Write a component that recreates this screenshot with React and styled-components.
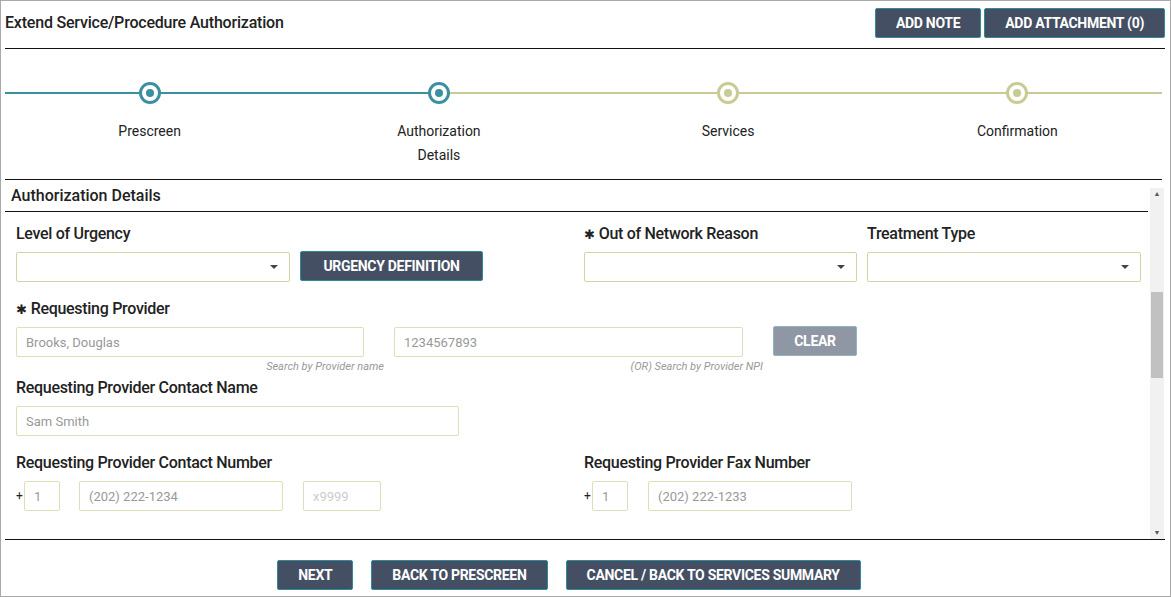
import React from 'react';
import styled, { createGlobalStyle } from 'styled-components';

const Global = createGlobalStyle`
  html, body { margin: 0; padding: 0; background: #fff; }
  body { font-family: Roboto, "Liberation Sans", sans-serif; color: #222; }
  * { box-sizing: border-box; }
`;

const Frame = styled.div`
  width: 1171px;
  height: 597px;
  border: 1px solid #a9a9a9;
  padding: 0 5px 0 4px;
  display: flex;
  flex-direction: column;
  overflow: hidden;
`;

const Header = styled.div`
  display: flex;
  align-items: center;
  justify-content: space-between;
  height: 48px;
  padding-bottom: 10px;
  padding-top: 6px;
  border-bottom: 1px solid #111;
`;

const Title = styled.div`
  font-size: 16px;
  font-weight: 500;
  letter-spacing: -0.2px;
`;

const Actions = styled.div`
  display: flex;
  gap: 3px;
  margin-right: 0;
`;

const DarkButton = styled.button`
  height: ${p => p.h || 30}px;
  padding: 0 ${p => p.px || 20}px;
  background: ${p => (p.muted ? '#8f97a4' : '#454f63')};
  color: #fff;
  border: 1px solid ${p => (p.muted ? '#8fb6bf' : '#2e8b9a')};
  border-radius: 2px;
  font-family: Roboto, "Liberation Sans", sans-serif;
  font-weight: 700;
  font-size: 14px;
  letter-spacing: -0.3px;
  cursor: pointer;
`;

const Stepper = styled.div`
  display: grid;
  grid-template-columns: repeat(4, 1fr);
  height: 131px;
  border-bottom: 1px solid #111;
  width: 1157px;
`;

const Step = styled.div`
  position: relative;
  display: flex;
  flex-direction: column;
  align-items: center;
  padding-top: 33px;
`;

const Track = styled.div`
  position: absolute;
  top: 43px;
  height: 2px;
  background: ${p => p.c};
  left: ${p => (p.side === 'left' ? '0' : '50%')};
  right: ${p => (p.side === 'left' ? '50%' : '0')};
`;

const Dot = styled.div`
  position: relative;
  z-index: 1;
  width: 22px;
  height: 22px;
  border-radius: 50%;
  border: 3px solid ${p => p.c};
  background: #fff;
  display: flex;
  align-items: center;
  justify-content: center;
  &::after {
    content: '';
    width: 8px;
    height: 8px;
    border-radius: 50%;
    background: ${p => p.c};
  }
`;

const StepLabel = styled.div`
  margin-top: 15px;
  font-size: 14px;
  line-height: 24px;
  text-align: center;
  width: 100px;
`;

const Body = styled.div`
  display: flex;
  height: 360px;
  border-bottom: 1px solid #111;
`;

const Content = styled.div`
  flex: 1;
  padding-top: 6px;
`;

const SectionTitle = styled.div`
  font-size: 16px;
  font-weight: 500;
  padding: 0 0 6px 6px;
  border-bottom: 1px solid #111;
`;

const Scrollbar = styled.div`
  width: 14px;
  margin: 8px 1px 0 2px;
  background: #f1f1f1;
  display: flex;
  flex-direction: column;
  align-items: center;
  font-size: 7px;
  color: #555;
  padding: 2px 0;
`;

const Thumb = styled.div`
  width: 12px;
  height: 86px;
  margin-top: 94px;
  background: #c1c1c1;
  flex: none;
`;

const Form = styled.div`
  padding: 0 0 0 11px;
`;

const Row = styled.div`
  display: flex;
  align-items: flex-start;
  margin-top: ${p => p.mt || 0}px;
`;

const Field = styled.div`
  width: ${p => p.w}px;
  margin-right: ${p => p.mr || 0}px;
  display: flex;
  flex-direction: column;
`;

const Label = styled.div`
  font-size: 16px;
  font-weight: 500;
  letter-spacing: -0.3px;
  height: 24px;
  line-height: 24px;
  margin-bottom: 6px;
  color: #222;
`;

const Star = styled.span`
  font-size: 13px;
  margin-right: 4px;
`;

const Select = styled.div`
  height: 30px;
  width: ${p => p.w}px;
  border: 1px solid #d2d5a3;
  border-radius: 2px;
  display: flex;
  align-items: center;
  justify-content: flex-end;
  padding-right: 11px;
  &::after {
    content: '';
    border-left: 4px solid transparent;
    border-right: 4px solid transparent;
    border-top: 4px solid #444;
  }
`;

const Input = styled.input`
  height: 30px;
  width: ${p => p.w}px;
  margin-right: ${p => p.mr || 0}px;
  border: 1px solid #dcdfb8;
  border-radius: 2px;
  padding: 0 9px;
  font-family: Roboto, "Liberation Sans", sans-serif;
  font-size: 13px;
  color: #999;
  flex: none;
  &::placeholder { color: ${p => (p.faint ? '#ccc' : '#999')}; }
`;

const Hint = styled.div`
  font-size: 11px;
  font-style: italic;
  color: #999;
  text-align: right;
  margin-top: 3px;
  margin-right: -20px;
`;

const Plus = styled.span`
  font-size: 12px;
  width: 8px;
  line-height: 30px;
  flex: none;
`;

const Footer = styled.div`
  display: flex;
  justify-content: center;
  gap: 18px;
  padding-top: 20px;
  padding-right: 32px;
`;

const steps = [
  { label: 'Prescreen', left: '#3a8fa0', right: '#3a8fa0', dot: '#3a8fa0' },
  { label: 'Authorization Details', left: '#3a8fa0', right: '#c8cb93', dot: '#3a8fa0' },
  { label: 'Services', left: '#c8cb93', right: '#c8cb93', dot: '#c8cb93' },
  { label: 'Confirmation', left: '#c8cb93', right: '#c8cb93', dot: '#c8cb93' },
];

export default function App() {
  return (
    <Frame>
      <Global />
      <Header>
        <Title>Extend Service/Procedure Authorization</Title>
        <Actions>
          <DarkButton px={20}>ADD NOTE</DarkButton>
          <DarkButton px={20}>ADD ATTACHMENT (0)</DarkButton>
        </Actions>
      </Header>

      <Stepper>
        {steps.map(s => (
          <Step key={s.label}>
            <Track side="left" c={s.left} />
            <Track side="right" c={s.right} />
            <Dot c={s.dot} />
            <StepLabel>{s.label}</StepLabel>
          </Step>
        ))}
      </Stepper>

      <Body>
        <Content>
          <SectionTitle>Authorization Details</SectionTitle>
          <Form>
            <Row mt={10}>
              <Field w={274} mr={10}>
                <Label>Level of Urgency</Label>
                <Select w={274} />
              </Field>
              <Field w={284}>
                <Label>&nbsp;</Label>
                <DarkButton style={{ width: 183, marginTop: -1 }}>URGENCY DEFINITION</DarkButton>
              </Field>
              <Field w={273} mr={10}>
                <Label><Star>✱</Star>Out of Network Reason</Label>
                <Select w={273} />
              </Field>
              <Field w={274}>
                <Label>Treatment Type</Label>
                <Select w={274} />
              </Field>
            </Row>

            <Row mt={15}>
              <Field w={900}>
                <Label><Star>✱</Star>Requesting Provider</Label>
                <Row>
                  <Field w={348} mr={30}>
                    <Input w={348} placeholder="Brooks, Douglas" />
                    <Hint>Search by Provider name</Hint>
                  </Field>
                  <Field w={349} mr={30}>
                    <Input w={349} placeholder="1234567893" />
                    <Hint>(OR) Search by Provider NPI</Hint>
                  </Field>
                  <DarkButton muted style={{ width: 84, marginTop: -1 }}>CLEAR</DarkButton>
                </Row>
              </Field>
            </Row>

            <Row mt={3}>
              <Field w={443}>
                <Label>Requesting Provider Contact Name</Label>
                <Input w={443} placeholder="Sam Smith" />
              </Field>
            </Row>

            <Row mt={15}>
              <Field w={568}>
                <Label>Requesting Provider Contact Number</Label>
                <Row>
                  <Plus>+</Plus>
                  <Input w={36} mr={19} placeholder="1" />
                  <Input w={204} mr={20} placeholder="(202) 222-1234" />
                  <Input w={78} faint placeholder="x9999" />
                </Row>
              </Field>
              <Field w={300}>
                <Label>Requesting Provider Fax Number</Label>
                <Row>
                  <Plus>+</Plus>
                  <Input w={36} mr={20} placeholder="1" />
                  <Input w={204} placeholder="(202) 222-1233" />
                </Row>
              </Field>
            </Row>
          </Form>
        </Content>
        <Scrollbar>
          <span>▲</span>
          <Thumb />
          <span style={{ marginTop: 'auto' }}>▼</span>
        </Scrollbar>
      </Body>

      <Footer>
        <DarkButton>NEXT</DarkButton>
        <DarkButton>BACK TO PRESCREEN</DarkButton>
        <DarkButton>CANCEL / BACK TO SERVICES SUMMARY</DarkButton>
      </Footer>
    </Frame>
  );
}
